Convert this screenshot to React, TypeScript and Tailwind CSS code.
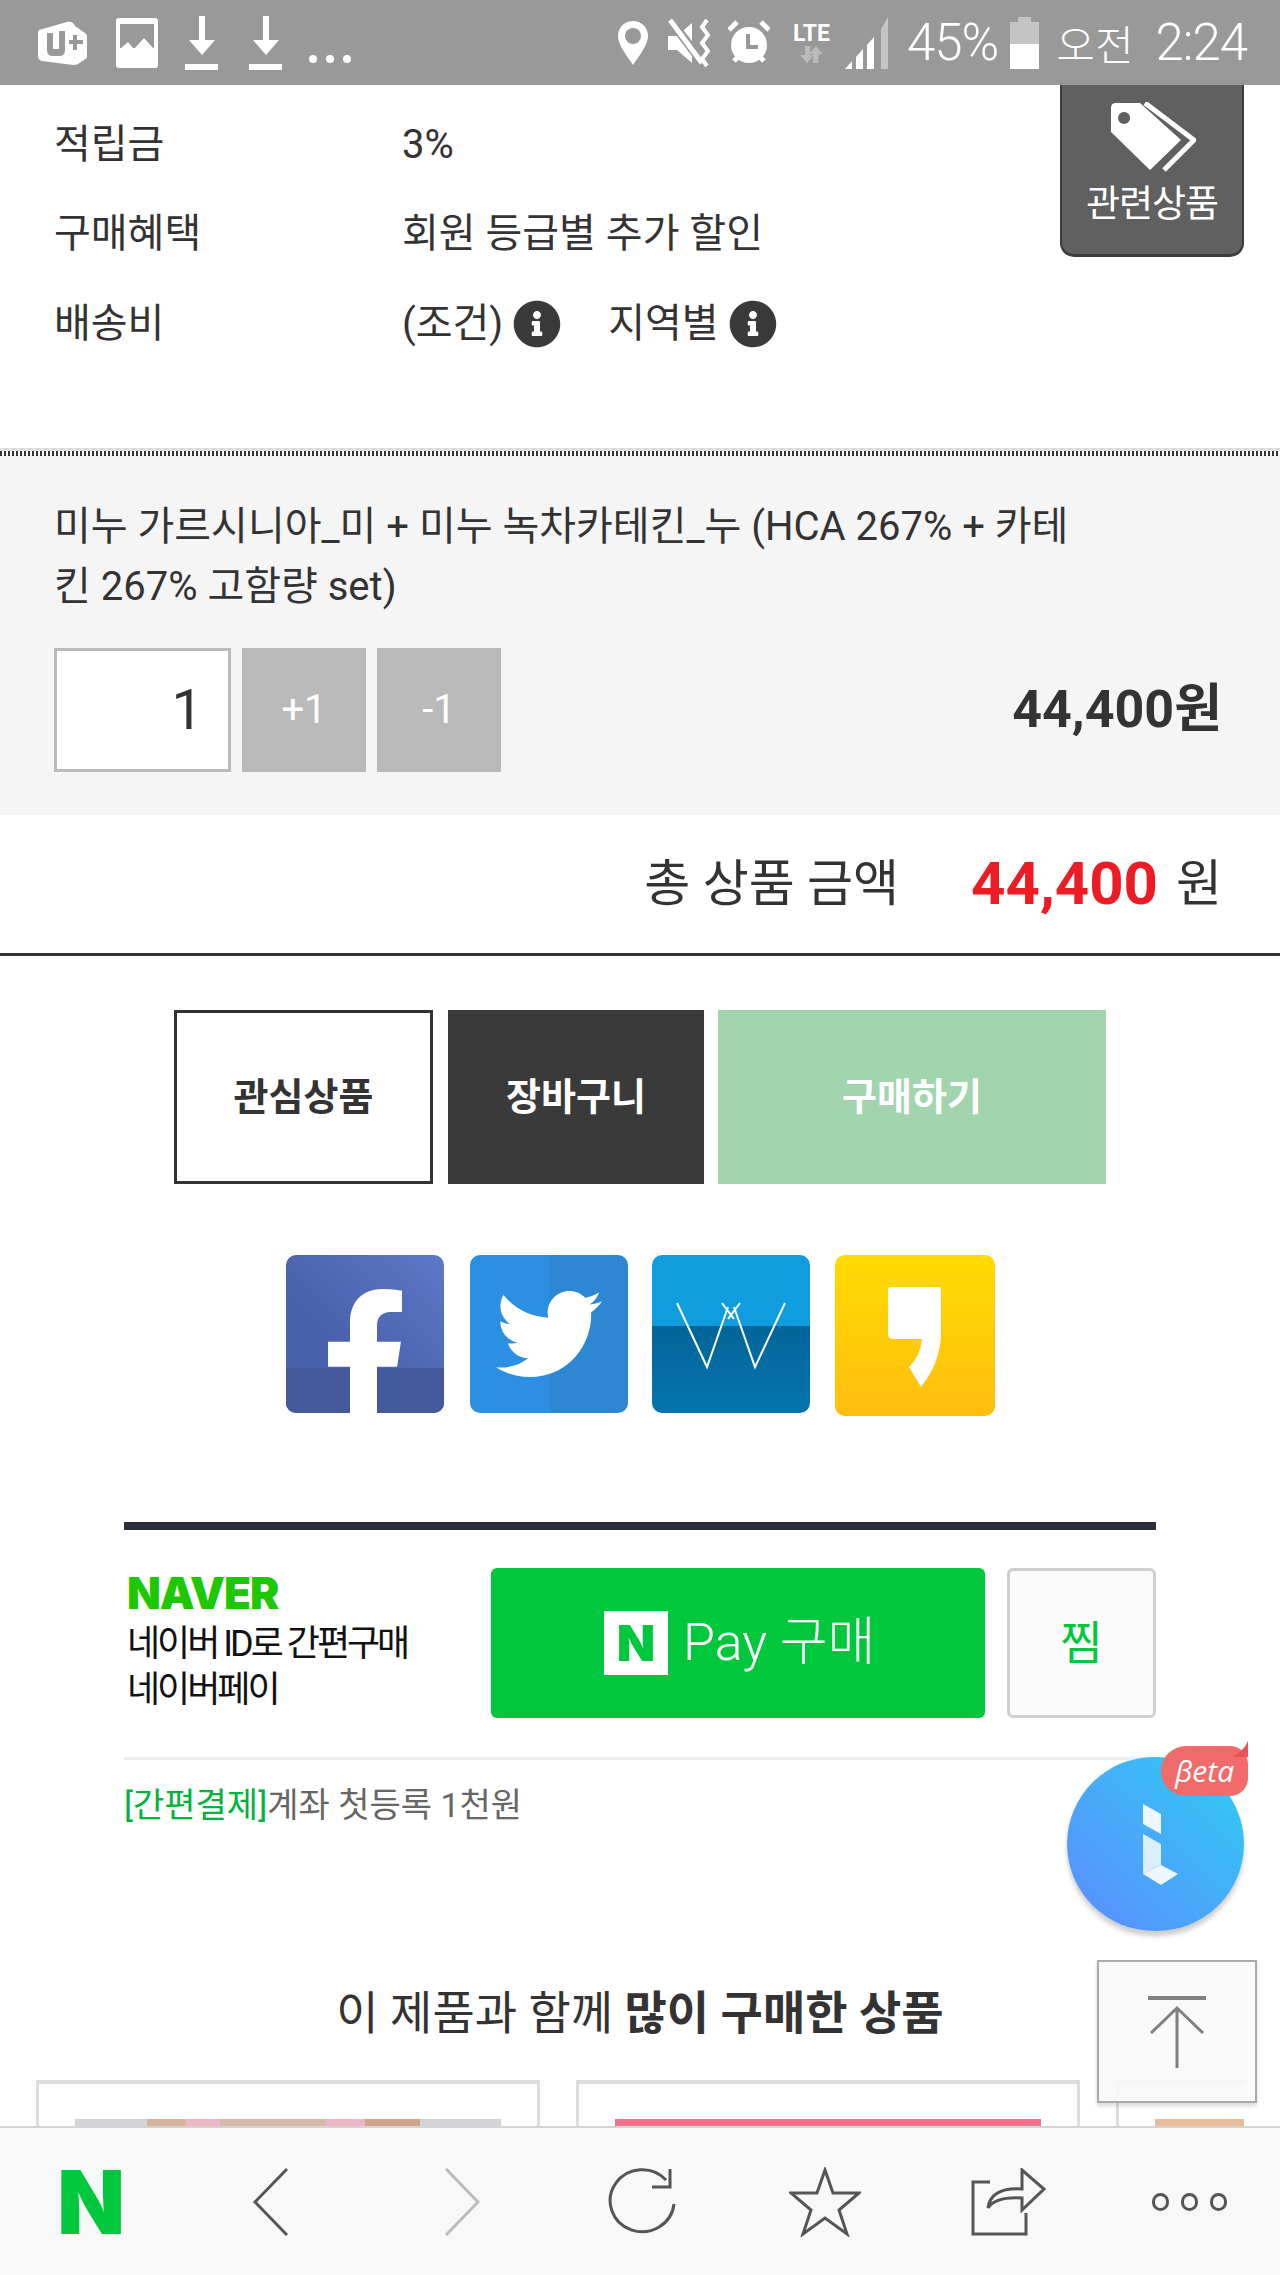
import { FaFacebookF, FaInfoCircle, FaTwitter } from "react-icons/fa";

const FONT = "font-['Roboto','Noto_Sans_CJK_KR',sans-serif]";

const DownloadIcon = ({ className }: { className: string }) => (
  <svg viewBox="0 0 34 54" className={className} fill="#fff">
    <rect x="14" y="0" width="6" height="25" />
    <path d="M4 24H30L17 39Z" />
    <rect x="0" y="48" width="33" height="6" />
  </svg>
);

const StatusBar = () => (
  <div className="flex h-[85px] shrink-0 items-center bg-[#999999] text-white">
    <svg viewBox="0 0 50 44" className="ml-[37px] h-[44px] w-[50px]">
      <path d="M2 9 30 1q6-1 8 4l10 7q2 1 2 4v21l-9 6q-2 1-5 1L5 40q-4-1-4-5V12q0-2 1-3Z" fill="#fff" />
      <path d="M10 12v17q0 6 6 6h6q6 0 6-6V10h-6v18h-6V12Z" fill="#999" />
      <path d="M36 14h4v5h6v4h-6v6h-4v-6h-4v-4h4Z" fill="#999" />
    </svg>
    <svg viewBox="0 0 42 50" className="ml-[29px] h-[50px] w-[42px]">
      <rect width="42" height="50" rx="3" fill="#fff" />
      <rect x="4" y="6" width="34" height="24" fill="#999" />
      <path d="M4 31 12 24l6 7 10-11 10 11Z" fill="#fff" />
    </svg>
    <DownloadIcon className="ml-[27px] h-[54px] w-[34px]" />
    <DownloadIcon className="ml-[30px] h-[54px] w-[34px]" />
    <div className="ml-[26px] mt-[33px] flex gap-[9px]">
      <span className="h-[8px] w-[8px] rounded-full bg-white" />
      <span className="h-[8px] w-[8px] rounded-full bg-white" />
      <span className="h-[8px] w-[8px] rounded-full bg-white" />
    </div>
    <svg viewBox="0 0 30 44" className="ml-[267px] h-[44px] w-[30px]">
      <path d="M15 0C6 0 0 7 0 15c0 9 9 20 15 29 6-9 15-20 15-29C30 7 24 0 15 0Z" fill="#fff" />
      <circle cx="15" cy="15" r="8" fill="#999" />
    </svg>
    <svg viewBox="0 0 46 50" className="ml-[20px] h-[50px] w-[46px]">
      <path d="M0 18h9L24 5v40L9 32H0Z" fill="#fff" />
      <path d="M3 3 34 44" stroke="#999" strokeWidth="9" />
      <path d="M2 2 34 45" stroke="#fff" strokeWidth="5" />
      <path d="M39 2l-5 7 6 8-6 8 6 8-6 8 5 7" stroke="#fff" strokeWidth="4" fill="none" />
    </svg>
    <svg viewBox="0 0 42 46" className="ml-[14px] h-[46px] w-[42px]">
      <circle cx="21" cy="25" r="18" fill="#fff" />
      <path d="M1 10 9 2M41 10 33 2M6 41l5-5M36 41l-5-5" stroke="#fff" strokeWidth="5" />
      <path d="M20 14v13h10" stroke="#999" strokeWidth="4" fill="none" />
    </svg>
    <div className="ml-[18px] flex w-[47px] flex-col items-center">
      <span className="font-['Roboto'] text-[23px] font-bold leading-[24px]">LTE</span>
      <svg viewBox="0 0 28 17" className="h-[17px] w-[28px]" fill="#bbb">
        <path d="M7 0h5v9h4L9 17 2 9h5ZM20 17h-5V8h-4l7-8 7 8h-4Z" />
      </svg>
    </div>
    <svg viewBox="0 0 44 52" className="ml-[10px] h-[52px] w-[44px]">
      <path d="M0 52 7 44v8ZM11 40l7-8v20h-7ZM22 28l7-8v32h-7Z" fill="#fff" />
      <path d="M36 12 43 0v52h-7Z" fill="#c4c4c4" />
    </svg>
    <span className="ml-[18px] font-['Roboto'] text-[51px] font-light leading-none tracking-[-1px]">45%</span>
    <svg viewBox="0 0 29 52" className="ml-[12px] h-[52px] w-[29px]">
      <path d="M8 0h13v5h8v22H0V5h8Z" fill="#c4c4c4" />
      <rect y="27" width="29" height="25" fill="#fff" />
    </svg>
    <span className="ml-[17px] font-['Noto_Sans_CJK_KR'] text-[42px] font-light leading-none">오전</span>
    <span className="ml-[22px] font-['Roboto'] text-[51px] font-light leading-none tracking-[-1px]">2:24</span>
  </div>
);

const InfoRow = ({ label, children }: { label: string; children: React.ReactNode }) => (
  <div className="flex h-[89.5px] items-center">
    <div className="w-[348px]">{label}</div>
    <div className="flex items-center">{children}</div>
  </div>
);

const ShareButtons = () => (
  <div className="mt-[71px] flex justify-center">
    <div className="relative flex h-[158px] w-[158px] items-end justify-center overflow-hidden rounded-[10px] bg-[linear-gradient(45deg,#4a62ad_40%,#5d78c8)]">
      <div className="absolute bottom-0 h-[45px] w-full bg-[#44599c]" />
      <FaFacebookF className="relative mb-[-14px] h-[138px] w-[110px] text-white" />
    </div>
    <div className="ml-[26px] flex h-[158px] w-[158px] items-center justify-center rounded-[10px] bg-[linear-gradient(90deg,#2b8fe3_50%,#2e87d2_50%)]">
      <FaTwitter className="h-[110px] w-[106px] text-white" />
    </div>
    <div className="ml-[24px] relative flex h-[158px] w-[158px] items-center justify-center overflow-hidden rounded-[10px] bg-[linear-gradient(180deg,#0f9ddf_45%,#02659a_45%,#0575ad)]">
      <svg viewBox="0 0 114 70" className="relative mt-[4px] h-[70px] w-[114px]" fill="none">
        <path d="M3 2 33 66 54 6M60 6 81 66 111 2M48 2l12 16M66 2 54 18" stroke="#fff" strokeWidth="2" />
      </svg>
    </div>
    <div className="ml-[25px] flex h-[161px] w-[160px] items-center justify-center rounded-[10px] bg-[linear-gradient(180deg,#ffdb00,#ffbd10)]">
      <svg viewBox="0 0 53 100" className="mt-[3px] h-[100px] w-[53px]">
        <path d="M3 0H50q3 0 3 3V48q-1 28-20 52L21 80q11-10 13-28H5q-5 0-5-5V3Q0 0 3 0Z" fill="#fff" />
      </svg>
    </div>
  </div>
);

const NaverBox = () => (
  <div className="mx-[124px] mt-[106px] w-[1032px]">
    <div className="h-[8px] bg-[#2a2f3b]" />
    <div className="mt-[38px] flex h-[150px]">
      <div className="w-[367px] pl-[3px] pt-[6px] text-[#111]">
        <div className="font-['Inter'] text-[44px] font-black leading-[38px] tracking-[-1px] text-[#1ec800]">NAVER</div>
        <div className="mt-[9px] text-[36px] leading-[46px] tracking-[-3px]">
          네이버 ID로 간편구매
          <br />
          네이버페이
        </div>
      </div>
      <div className="flex h-[150px] w-[494px] items-center rounded-[6px] bg-[#00c73c] pl-[113px] text-white">
        <span className="flex h-[64px] w-[64px] items-center justify-center bg-white font-['Inter'] text-[50px] font-black leading-none text-[#00c73c]">N</span>
        <span className="ml-[15px] text-[52px] font-light leading-none">Pay 구매</span>
      </div>
      <div className="ml-[22px] flex h-[150px] w-[149px] items-center justify-center rounded-[6px] border-[3px] border-[#ccd0d0] bg-[#fbfbfb] text-[46px] text-[#00c73c]">찜</div>
    </div>
    <div className="mt-[39px] h-[3px] bg-[#eceef0]" />
    <div className="mt-[21px] text-[34px] leading-[48px] text-[#666]">
      <span className="text-[#00b33c]">[간편결제]</span>계좌 첫등록 1천원
    </div>
  </div>
);

const ProductCard = ({ imageClass, last }: { imageClass: string; last?: boolean }) => (
  <div className={`h-[60px] w-[504px] shrink-0 border-x-[3px] border-t-[4px] border-[#dddddd] pt-[35px] px-[36px] ${last ? "border-r-0" : ""}`}>
    <div className={`h-[8px] ${imageClass}`} />
  </div>
);

const BottomBar = () => (
  <div className="flex h-[149px] shrink-0 items-center border-t-2 border-[#cfd6d4] bg-[#f8f8f8]">
    <span className="ml-[56px] w-[70px] text-center font-['Inter'] text-[88px] font-black leading-none text-[#00c73c]">N</span>
    <svg viewBox="0 0 35 68" className="ml-[127px] h-[68px] w-[35px]" fill="none" stroke="#555" strokeWidth="3">
      <path d="M34 1 2 34l32 33" />
    </svg>
    <svg viewBox="0 0 35 68" className="ml-[157px] h-[68px] w-[35px]" fill="none" stroke="#bbb" strokeWidth="3">
      <path d="M1 1 33 34 1 67" />
    </svg>
    <svg viewBox="0 0 68 68" className="ml-[128px] h-[68px] w-[68px]" fill="none" stroke="#555" strokeWidth="3">
      <path d="M66 36A32 31 0 1 1 58 12" />
      <path d="M62 1V19H44" />
    </svg>
    <svg viewBox="0 0 72 70" className="ml-[113px] h-[70px] w-[72px]" fill="none" stroke="#555" strokeWidth="3">
      <path d="M36 3 44 26H70L50 43 58 67 36 51 14 67 22 43 2 26H28Z" />
    </svg>
    <svg viewBox="0 0 76 68" className="ml-[109px] h-[68px] w-[76px]" fill="none" stroke="#555" strokeWidth="3">
      <path d="M20 14H3V66H56V45" />
      <path d="M18 40C20 24 34 20 52 21V2L74 21 52 42V30C36 29 24 31 18 40Z" />
    </svg>
    <div className="ml-[106px] flex w-[75px] justify-between">
      <span className="h-[18px] w-[17px] rounded-full border-[3px] border-[#555]" />
      <span className="h-[18px] w-[17px] rounded-full border-[3px] border-[#555]" />
      <span className="h-[18px] w-[17px] rounded-full border-[3px] border-[#555]" />
    </div>
  </div>
);

export default function App() {
  return (
    <div className={`relative flex h-[2275px] w-[1280px] flex-col overflow-hidden bg-white text-[#333] ${FONT}`}>
      <StatusBar />
      <main className="min-h-0 flex-1 overflow-hidden">
        <section className="h-[363px] pl-[54px] pt-[15px] text-[40px] leading-none">
          <InfoRow label="적립금">3%</InfoRow>
          <InfoRow label="구매혜택">회원 등급별 추가 할인</InfoRow>
          <InfoRow label="배송비">
            (조건)
            <FaInfoCircle className="ml-[10px] h-[48px] w-[48px] text-[#3a3a3a]" />
            <span className="ml-[47px]">지역별</span>
            <FaInfoCircle className="ml-[10px] h-[48px] w-[48px] text-[#3a3a3a]" />
          </InfoRow>
        </section>
        <div className="h-[8px] border-t-[3px] border-[#dddddd] bg-[repeating-linear-gradient(90deg,#333_0,#333_2px,#fff_2px,#fff_4px)]" />
        <section className="h-[359px] bg-[#f5f5f5] px-[54px] pt-[41px]">
          <p className="text-[40px] leading-[60px]">
            미누 가르시니아_미 + 미누 녹차카테킨_누 (HCA 267% + 카테
            <br />
            킨 267% 고함량 set)
          </p>
          <div className="mt-[31px] flex items-center">
            <div className="flex h-[124px] w-[177px] items-center justify-end border-[3px] border-[#bbbbbb] bg-white pr-[25px] text-[56px] leading-none">1</div>
            <div className="ml-[11px] flex h-[124px] w-[124px] items-center justify-center bg-[#b9b9b9] text-[40px] leading-none text-white">+1</div>
            <div className="ml-[11px] flex h-[124px] w-[124px] items-center justify-center bg-[#b9b9b9] text-[40px] leading-none text-white">-1</div>
            <div className="ml-auto mr-[4px] text-[52px] font-bold leading-none">44,400원</div>
          </div>
        </section>
        <section className="flex h-[141px] items-center justify-end border-b-[3px] border-[#333] pr-[58px] text-[50px] leading-none">
          <span>총 상품 금액</span>
          <span className="ml-[72px] text-[60px] font-bold text-[#ed1c24]">44,400</span>
          <span className="ml-[18px]">원</span>
        </section>
        <div className="mt-[54px] flex justify-center text-[38px] font-bold leading-none">
          <div className="flex h-[174px] w-[259px] items-center justify-center border-[3px] border-[#333] bg-white">관심상품</div>
          <div className="ml-[15px] flex h-[174px] w-[256px] items-center justify-center bg-[#3a3a3a] text-white">장바구니</div>
          <div className="ml-[14px] flex h-[174px] w-[388px] items-center justify-center bg-[#a2d5ae] text-white">구매하기</div>
        </div>
        <ShareButtons />
        <NaverBox />
        <h2 className="mt-[154px] text-center text-[46px] font-normal leading-[60px]">
          이 제품과 함께 <b className="font-bold">많이 구매한 상품</b>
        </h2>
        <div className="ml-[36px] mt-[37px] flex w-[1208px] gap-[36px] overflow-hidden">
          <ProductCard imageClass="bg-[linear-gradient(90deg,#d3d3d8_17%,#d8b29a_17%,#d8b29a_26%,#eeb5c5_26%,#eeb5c5_34%,#d8b8a8_34%,#d8b8a8_59%,#eeb5c5_59%,#eeb5c5_68%,#d0a489_68%,#d0a489_81%,#d3d3d8_81%)]" />
          <ProductCard imageClass="bg-[#f0728c]" />
          <ProductCard imageClass="bg-[#e8bc98]" last />
        </div>
      </main>
      <BottomBar />

      <div className="absolute left-[1060px] top-[85px] flex h-[172px] w-[184px] flex-col items-center rounded-b-[14px] border-x-2 border-b-[3px] border-[#3c3c3c] bg-[#606060] text-white">
        <svg viewBox="0 0 88 70" className="mt-[17px] h-[70px] w-[88px]">
          <path d="M8 1H32L73 38 42 68 3 30V6Q3 1 8 1ZM16 10a6 6 0 1 0 .1 0Z" fill="#fff" fillRule="evenodd" />
          <path d="M37 1 86 38 56 68" fill="none" stroke="#fff" strokeWidth="5" />
        </svg>
        <span className="mt-[14px] text-[37px] leading-none tracking-[-1px]">관련상품</span>
      </div>

      <div className="absolute left-[1067px] top-[1757px] h-[174px] w-[177px] rounded-full bg-[linear-gradient(45deg,#5d8bff,#2ecdf2)] shadow-[0_5px_5px_rgba(0,0,0,0.2)]">
        <svg viewBox="0 0 177 174" className="h-full w-full">
          <path d="M76 47 94 57V77L76 67Z" fill="#fff" fillOpacity="0.9" />
          <path d="M76 77 94 87V108L76 117Z" fill="#fff" fillOpacity="0.8" />
          <path d="M76 117 94 108 111 117 94 128Z" fill="#fff" fillOpacity="0.9" />
        </svg>
      </div>
      <div className="absolute left-[1161px] top-[1746px] flex h-[50px] w-[87px] items-center justify-center rounded-l-[25px] rounded-r-[18px] bg-[#f26b6b] text-[30px] italic leading-none text-white">
        <span className="font-['Open_Sans']">βeta</span>
        <svg viewBox="0 0 16 16" className="absolute right-0 top-[-5px] h-[16px] w-[16px]">
          <path d="M16 0V16H0Q12 10 16 0Z" fill="#e8525a" />
        </svg>
      </div>
      <div className="absolute left-[1097px] top-[1960px] flex h-[143px] w-[160px] items-center justify-center border-2 border-[#aaaaaa] bg-[#f8f8f8]/90 shadow-[0_3px_4px_rgba(0,0,0,0.15)]">
        <svg viewBox="0 0 58 72" className="h-[72px] w-[58px]" fill="none" stroke="#808080" strokeWidth="3">
          <path d="M0 2H58" strokeWidth="4" />
          <path d="M29 72V12M3 37 29 12 55 37" />
        </svg>
      </div>
    </div>
  );
}
